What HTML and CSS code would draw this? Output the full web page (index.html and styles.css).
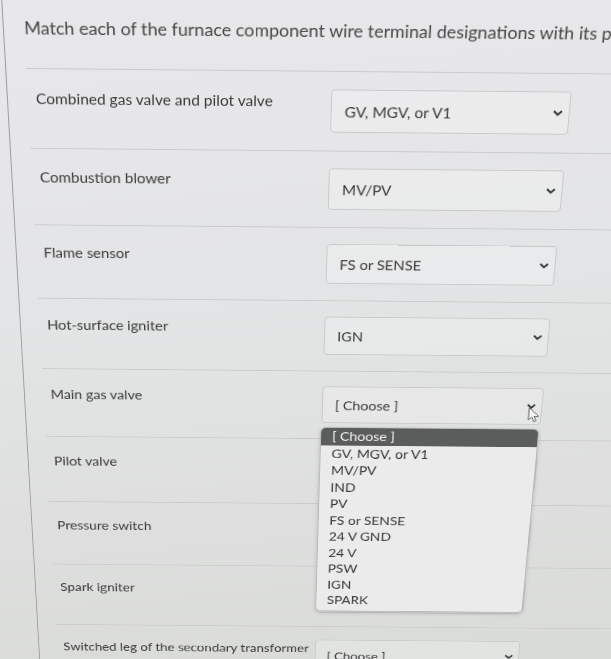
FILE: index.html
```html
<!DOCTYPE html>
<html lang="en">
<head>
  <meta charset="UTF-8">
  <meta name="viewport" content="width=device-width, initial-scale=1.0">
  <title>Quiz | Matching</title>
  <link rel="stylesheet" href="styles.css">
</head>
<body>
  <div class="page">
    <div class="quiz">
      <div class="question">Match each of the furnace component wire terminal designations with its proper component.</div>

      <div class="row">
        <div class="label">Combined gas valve and pilot valve</div>
        <div class="select"><span>GV, MGV, or V1</span><svg class="chevron" viewBox="0 0 10 7"><path d="M1 1.2l4 4 4-4"/></svg></div>
      </div>

      <div class="row">
        <div class="label">Combustion blower</div>
        <div class="select"><span>MV/PV</span><svg class="chevron" viewBox="0 0 10 7"><path d="M1 1.2l4 4 4-4"/></svg></div>
      </div>

      <div class="row">
        <div class="label">Flame sensor</div>
        <div class="select"><span>FS or SENSE</span><svg class="chevron" viewBox="0 0 10 7"><path d="M1 1.2l4 4 4-4"/></svg></div>
      </div>

      <div class="row">
        <div class="label">Hot-surface igniter</div>
        <div class="select"><span>IGN</span><svg class="chevron" viewBox="0 0 10 7"><path d="M1 1.2l4 4 4-4"/></svg></div>
      </div>

      <div class="row">
        <div class="label">Main gas valve</div>
        <div class="select open">
          <span>[ Choose ]</span><svg class="chevron" viewBox="0 0 10 7"><path d="M1 1.2l4 4 4-4"/></svg>
          <svg class="pointer" viewBox="0 0 12 19"><path d="M1 1v15l3.6-3.4 2.6 5.6 2.4-1.1-2.6-5.5H12z"/></svg>
          <ul class="options">
            <li class="active">[ Choose ]</li>
            <li>GV, MGV, or V1</li>
            <li>MV/PV</li>
            <li>IND</li>
            <li>PV</li>
            <li>FS or SENSE</li>
            <li>24 V GND</li>
            <li>24 V</li>
            <li>PSW</li>
            <li>IGN</li>
            <li>SPARK</li>
          </ul>
        </div>
      </div>

      <div class="row">
        <div class="label">Pilot valve</div>
        <div class="select"><span>[ Choose ]</span><svg class="chevron" viewBox="0 0 10 7"><path d="M1 1.2l4 4 4-4"/></svg></div>
      </div>

      <div class="row">
        <div class="label">Pressure switch</div>
        <div class="select"><span>[ Choose ]</span><svg class="chevron" viewBox="0 0 10 7"><path d="M1 1.2l4 4 4-4"/></svg></div>
      </div>

      <div class="row">
        <div class="label">Spark igniter</div>
        <div class="select"><span>[ Choose ]</span><svg class="chevron" viewBox="0 0 10 7"><path d="M1 1.2l4 4 4-4"/></svg></div>
      </div>

      <div class="row">
        <div class="label">Switched leg of the secondary transformer</div>
        <div class="select"><span>[ Choose ]</span><svg class="chevron" viewBox="0 0 10 7"><path d="M1 1.2l4 4 4-4"/></svg></div>
      </div>
    </div>
  </div>
</body>
</html>
```

FILE: styles.css
```css
* {
  margin: 0;
  padding: 0;
  box-sizing: border-box;
}

html, body {
  height: 100%;
  overflow: hidden;
}

body {
  background: linear-gradient(175deg, #e8e8ea 0%, #e3e4e5 45%, #d9dbd8 100%);
  font-family: Lato, "Open Sans", sans-serif;
  color: #3c3c3c;
}

/* photo of a screen: tilt the flat page back a little */
.page {
  width: 760px;
  height: 900px;
  transform-origin: 222px 100px;
  transform: perspective(1000px) rotateX(-15deg) skewY(0.55deg);
}

.quiz {
  margin-left: 7px;
  height: 100%;
  border-left: 1px solid #9c9d9c;
  padding: 17px 0 0 20px;
}

.question {
  font-size: 17.6px;
  line-height: 24px;
  color: #474747;
  white-space: nowrap;
  margin-bottom: 28px;
}

.row {
  display: grid;
  grid-template-columns: 295px 240px;
  height: 83px;
  padding: 20px 0 0 8px;
  border-top: 1px solid #c9cac9;
}

.label {
  font-size: 15.5px;
  line-height: 20px;
  color: #3a3a3a;
}

.select {
  position: relative;
  display: flex;
  align-items: center;
  justify-content: space-between;
  height: 45px;
  margin-top: -2px;
  padding: 0 6px 0 13px;
  border: 1px solid #c8c9c9;
  border-radius: 4px;
  background: rgba(255, 255, 255, 0.22);
  font-size: 15.5px;
  color: #3a3a3a;
}

.chevron {
  width: 10px;
  height: 7px;
  fill: none;
  stroke: #2e3134;
  stroke-width: 2;
}

.pointer {
  position: absolute;
  right: 2px;
  top: 22px;
  width: 12px;
  height: 19px;
  fill: #f4f4f4;
  stroke: #55585a;
  stroke-width: 1;
  stroke-linejoin: round;
}

.options {
  position: absolute;
  top: calc(100% + 6px);
  left: -2px;
  width: 240px;
  list-style: none;
  background: #ebebeb;
  border: 1px solid #b9b9b9;
  border-radius: 6px;
  box-shadow: 0 2px 5px rgba(0, 0, 0, 0.18);
  padding-bottom: 3px;
  z-index: 5;
}

.options li {
  font-size: 15.5px;
  line-height: 21.5px;
  padding-left: 12px;
  color: #383838;
}

.options li.active {
  background: #5b5c5c;
  color: #f2f2f2;
  border-radius: 5px 5px 0 0;
}
```
